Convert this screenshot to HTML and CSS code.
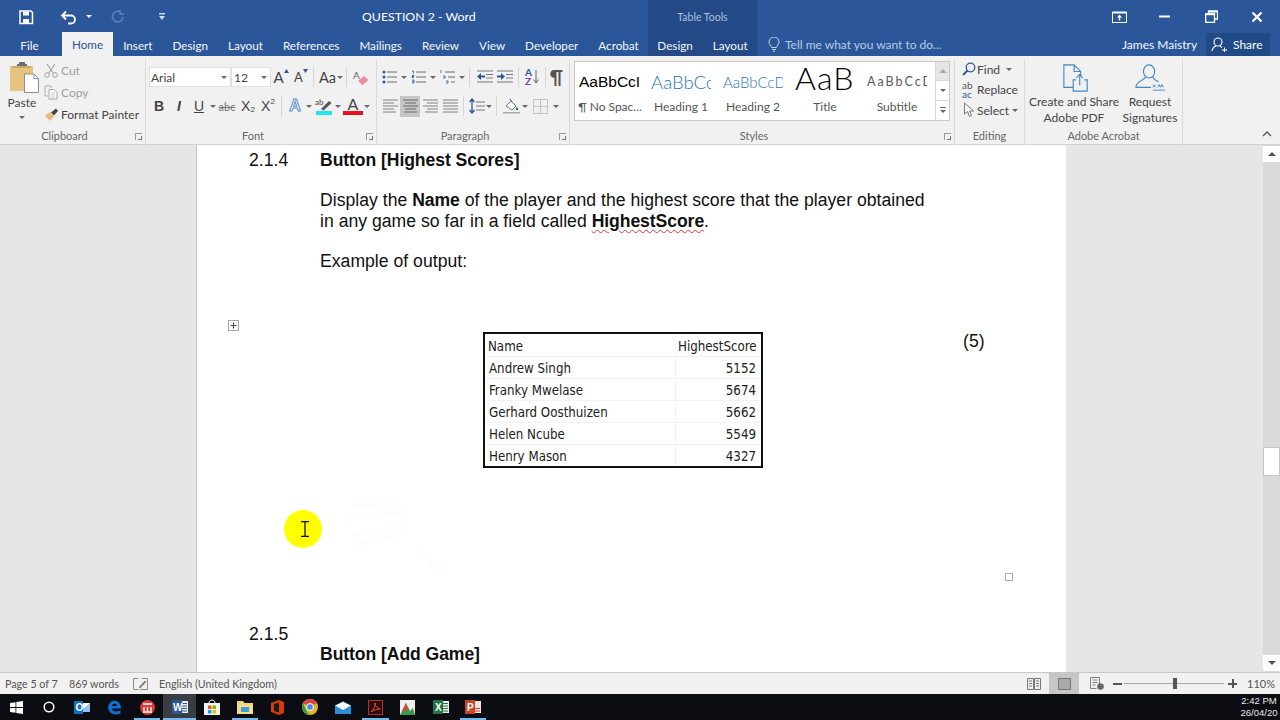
FILE: index.html
```html
<!DOCTYPE html>
<html lang="en">
<head>
<meta charset="utf-8">
<title>QUESTION 2 - Word</title>
<link rel="stylesheet" href="styles.css">
</head>
<body>
<div class="app">
  <header class="chrome">
    <div class="titlebar">
      <div class="qat">
        <span class="qat-item q-save"><svg width="16" height="16" viewBox="0 0 16 16"><path d="M2 2h11l1.500 1.500V14.500H2z" fill="none" stroke="#fff" stroke-width="1.500"/><rect x="5" y="2.500" width="6" height="4" fill="#fff"/><rect x="5" y="10" width="6" height="4" fill="#fff"/></svg></span>
        <span class="qat-item q-undo"><svg width="18" height="16" viewBox="0 0 18 16"><path d="M6 2.500 2 6.500l4 4M2.500 6.500H11a4 4 0 0 1 0 8H8" fill="none" stroke="#fff" stroke-width="1.800"/></svg></span>
        <span class="caret caret-white q-car"></span>
        <span class="qat-item q-redo"><svg width="14" height="16" viewBox="0 0 14 16"><path d="M10 3.500A5.300 5.300 0 1 0 12 8M9 1v4h4" fill="none" stroke="#5c82b8" stroke-width="1.500"/></svg></span>
        <span class="qat-item q-custom"><svg width="8" height="8" viewBox="0 0 8 8"><rect x="1" y="0" width="6" height="1.500" fill="#cfdcee"/><path d="M1 3h6L4 7z" fill="#cfdcee"/></svg></span>
      </div>
      <div class="doc-title">QUESTION 2 - Word</div>
      <div class="ctx-title">Table Tools</div>
      <div class="win-ctrls">
        <span class="win w1"><svg width="15" height="12" viewBox="0 0 15 12"><rect x=".5" y="1.500" width="14" height="10" fill="none" stroke="#fff"/><rect x=".5" y=".5" width="14" height="2" fill="#fff"/><path d="M7.500 3.500 5 6.500h1.800V9.500h1.400V6.500H10z" fill="#fff"/></svg></span>
        <span class="win w2"><svg width="12" height="3" viewBox="0 0 12 3"><rect width="11" height="2" y=".5" fill="#fff"/></svg></span>
        <span class="win w3"><svg width="13" height="13" viewBox="0 0 13 13"><path d="M3.500 3V1h9v8h-3" fill="none" stroke="#fff" stroke-width="1.300"/><rect x=".7" y="3.700" width="8.800" height="8.600" fill="none" stroke="#fff" stroke-width="1.300"/><rect x="3.500" y="1" width="9" height="1.500" fill="#fff"/><rect x=".7" y="3.700" width="8.800" height="1.500" fill="#fff"/></svg></span>
        <span class="win w4"><svg width="12" height="12" viewBox="0 0 12 12"><path d="M1.500 1.500l9 9M10.500 1.500l-9 9" stroke="#fff" stroke-width="2.200"/></svg></span>
      </div>
    </div>
    <nav class="tabs">
      <div class="tabs-main">
        <span class="tab tab-file">File</span>
        <span class="tab tab-active">Home</span>
        <span class="tab">Insert</span>
        <span class="tab">Design</span>
        <span class="tab">Layout</span>
        <span class="tab">References</span>
        <span class="tab">Mailings</span>
        <span class="tab">Review</span>
        <span class="tab">View</span>
        <span class="tab">Developer</span>
        <span class="tab">Acrobat</span>
      </div>
      <div class="ctx-tabs">
        <span class="tab">Design</span>
        <span class="tab">Layout</span>
      </div>
      <span class="tell"><svg width="12" height="15" viewBox="0 0 12 15"><path d="M3.500 10.500C3 8.500 1 7.500 1 5a5 5 0 0 1 10 0c0 2.500-2 3.500-2.500 5.500zM4 12.500h4M5 14.300h2" fill="none" stroke="#c3d3ea" stroke-width="1"/></svg><span>Tell me what you want to do...</span></span>
      <span class="user">James Maistry</span>
      <span class="share"><svg width="16" height="15" viewBox="0 0 16 15"><circle cx="7" cy="5" r="4" fill="none" stroke="#fff" stroke-width="1.100"/><path d="M1 14c.5-3 2.500-4.500 4-5M9 9l2 1.500M11 13h5M13.500 10.500v5" fill="none" stroke="#fff" stroke-width="1.100"/></svg><span>Share</span></span>
    </nav>
  </header>

  <section class="ribbon">
    <div class="group g-clip">
      <div class="clip-body">
        <div class="paste">
          <svg width="30" height="31" viewBox="0 0 30 31"><rect x="0" y="4" width="23" height="25" fill="#e6c47f"/><rect x="2" y="4" width="19" height="2" fill="#c9a868"/><path d="M7 4V2h2V0h6v2h2v2z" fill="#6d6d6d"/><path d="M14.500 12H24l4.500 4.500V30.500h-14z" fill="#fff" stroke="#8f8f8f"/><path d="M24 12v4.500h4.500" fill="none" stroke="#8f8f8f"/></svg>
          <span class="paste-label">Paste</span>
          <span class="caret"></span>
        </div>
        <div class="clip-list">
          <div class="clip-row off"><svg width="14" height="15" viewBox="0 0 14 15"><path d="M3 1l6.500 9.500M11 1 4.500 10.500" stroke="#a5a5a5" stroke-width="1.200" fill="none"/><circle cx="3" cy="12" r="2.300" fill="none" stroke="#a5a5a5"/><circle cx="11" cy="12" r="2.300" fill="none" stroke="#a5a5a5"/></svg><span>Cut</span></div>
          <div class="clip-row off"><svg width="14" height="15" viewBox="0 0 14 15"><path d="M1 1h6v2M1 1v10h3" fill="none" stroke="#b0b0b0"/><path d="M5 4.500h5l3 3V14H5z" fill="#fff" stroke="#a5a5a5"/><path d="M7 8h4M7 10h4M7 12h4" stroke="#c5c5c5"/></svg><span>Copy</span></div>
          <div class="clip-row clip-fp"><svg width="15" height="15" viewBox="0 0 15 15"><path d="M1 8.500 6 5l4 4.500-4 4.500z" fill="#e5bf78"/><path d="M7 5.500l5-4 2 2.500-4 4.500z" fill="#444"/></svg><span>Format Painter</span></div>
        </div>
      </div>
      <div class="group-label">Clipboard</div>
      <span class="launcher"></span>
    </div>

    <div class="group g-font">
      <div class="rows">
        <div class="row">
          <span class="combo c-font"><span>Arial</span><i class="caret"></i></span>
          <span class="combo c-size"><span>12</span><i class="caret"></i></span>
          <span class="btn b-grow"><span class="big-a">A</span><svg width="5" height="4" viewBox="0 0 5 4"><path d="M0 4 2.500 0 5 4z" fill="#2b579a"/></svg></span>
          <span class="btn b-shrink"><span class="mid-a">A</span><svg width="5" height="4" viewBox="0 0 5 4"><path d="M0 0 2.500 4 5 0z" fill="#2b579a"/></svg></span>
          <span class="sep s-a"></span>
          <span class="btn b-case"><span class="aa">Aa</span><i class="caret"></i></span>
          <span class="sep s-b"></span>
          <span class="btn b-erase"><svg width="16" height="17" viewBox="0 0 16 17"><text x="0" y="10" class="mini">A</text><path d="M5 12 11 7l4.500 4-6 5z" fill="#ee8d9d"/></svg></span>
        </div>
        <div class="row">
          <span class="btn b-w20 fmt fmt-b">B</span>
          <span class="btn b-w20 fmt fmt-i">I</span>
          <span class="btn b-w20 fmt fmt-u">U</span>
          <i class="caret c-u"></i>
          <span class="btn b-strike">abc</span>
          <span class="btn b-w20 fmt fmt-x">X<sub>2</sub></span>
          <span class="btn b-w20 fmt fmt-x">X<sup>2</sup></span>
          <span class="sep s-c"></span>
          <span class="btn b-w20 a-fx">A</span>
          <i class="caret c-g"></i>
          <span class="btn b-w20"><svg width="18" height="17" viewBox="0 0 18 17"><text x="0" y="7" class="mini2">ab</text><path d="M6 11 14 3l2.500 2-8 7.500z" fill="#555"/><rect x="1" y="13" width="16" height="4" fill="#1fe8ee"/></svg></span>
          <i class="caret c-g"></i>
          <span class="btn b-w18 col-a">A</span>
          <i class="caret c-g"></i>
        </div>
      </div>
      <div class="group-label">Font</div>
      <span class="launcher"></span>
    </div>

    <div class="group g-para">
      <div class="rows">
        <div class="row">
          <span class="btn b-list"><svg width="16" height="14" viewBox="0 0 16 14"><circle cx="2" cy="2" r="1.500" fill="#2b579a"/><circle cx="2" cy="7" r="1.500" fill="#2b579a"/><circle cx="2" cy="12" r="1.500" fill="#2b579a"/><path d="M5 2h10M5 7h10M5 12h10" stroke="#6a6a6a"/></svg></span><i class="caret c-l"></i>
          <span class="btn b-list"><svg width="16" height="14" viewBox="0 0 16 14"><path d="M1 1h1.500v2.500M1 5.500h2v1H1v1h2M1 10h2v3H1M1 11.500h2" stroke="#2b579a" stroke-width=".8" fill="none"/><path d="M5 2h10M5 7h10M5 12h10" stroke="#6a6a6a"/></svg></span><i class="caret c-l"></i>
          <span class="btn b-list"><svg width="16" height="14" viewBox="0 0 16 14"><path d="M1 0v3M3 6h2v2H3M6 11h2v2H6" stroke="#2b579a" stroke-width=".8" fill="none"/><path d="M5 2h10M8 7h7M11 12h4" stroke="#6a6a6a"/></svg></span><i class="caret c-l"></i>
          <span class="sep s-d"></span>
          <span class="btn b-ind"><svg width="16" height="14" viewBox="0 0 16 14"><path d="M0 1h16M9 4.500h7M9 8h7M0 12h16" stroke="#777"/><path d="M0 6.500 4 3v2.500h4v2H4V10z" fill="#2b579a"/></svg></span>
          <span class="btn b-ind"><svg width="16" height="14" viewBox="0 0 16 14"><path d="M0 1h16M9 4.500h7M9 8h7M0 12h16" stroke="#777"/><path d="M8 6.500 4 3v2.500H0v2h4V10z" fill="#2b579a"/></svg></span>
          <span class="sep s-e"></span>
          <span class="btn b-sort"><span class="sort-az"><b>A</b><b class="z">Z</b></span><svg width="6" height="14" viewBox="0 0 6 14"><path d="M3 0v12M.5 9.500 3 13l2.500-3.500" fill="none" stroke="#666"/></svg></span>
          <span class="sep s-f"></span>
          <span class="btn b-pil">¶</span>
        </div>
        <div class="row">
          <span class="btn b-al"><svg width="15" height="14" viewBox="0 0 15 14"><path d="M0 1h15M0 4h11M0 7h15M0 10h11M0 13h13" stroke="#808080"/></svg></span>
          <span class="btn b-al b-on"><svg width="15" height="14" viewBox="0 0 15 14"><path d="M0 1h15M2 4h11M0 7h15M2 10h11M1 13h13" stroke="#6a6a6a"/></svg></span>
          <span class="btn b-al"><svg width="15" height="14" viewBox="0 0 15 14"><path d="M0 1h15M4 4h11M0 7h15M4 10h11M2 13h13" stroke="#808080"/></svg></span>
          <span class="btn b-al"><svg width="15" height="14" viewBox="0 0 15 14"><path d="M0 1h15M0 4h15M0 7h15M0 10h15M0 13h15" stroke="#808080"/></svg></span>
          <span class="sep s-g"></span>
          <span class="btn b-sp"><svg width="16" height="16" viewBox="0 0 16 16"><path d="M3 1v14M.5 4 3 1l2.500 3M.5 12 3 15l2.500-3" fill="none" stroke="#2b579a" stroke-width="1.300"/><path d="M7 4h9M7 8h9M7 12h9" stroke="#777"/></svg></span><i class="caret c-l"></i>
          <span class="sep s-h"></span>
          <span class="btn b-sh"><svg width="17" height="16" viewBox="0 0 17 16"><path d="M3 8 8 3l5 5-4 4z" fill="#fff" stroke="#777"/><path d="M7 1l2 3" stroke="#2b579a"/><path d="M14 9c1 1.500 1.500 2 1 3h-2c-.5-1 0-1.500 1-3z" fill="#2b579a"/><rect x="0" y="14" width="17" height="1.500" fill="#aaa"/></svg></span><i class="caret c-l"></i>
          <span class="btn b-bd"><svg width="15" height="15" viewBox="0 0 15 15"><path d="M.5.500h14v14H.5zM7.500.500v14M.5 7.500h14" fill="none" stroke="#c2c2c2"/></svg></span><i class="caret c-b"></i>
        </div>
      </div>
      <div class="group-label">Paragraph</div>
      <span class="launcher"></span>
    </div>

    <div class="group g-styles">
      <div class="gallery">
        <div class="style style-first"><div class="sample s-nospace">AaBbCcI</div><div class="style-name">¶ No Spac...</div></div>
        <div class="style"><div class="sample s-h1">AaBbCc</div><div class="style-name">Heading 1</div></div>
        <div class="style"><div class="sample s-h2">AaBbCcD</div><div class="style-name">Heading 2</div></div>
        <div class="style"><div class="sample s-title">AaB</div><div class="style-name">Title</div></div>
        <div class="style"><div class="sample s-sub">AaBbCcD</div><div class="style-name">Subtitle</div></div>
        <div class="gal-scroll">
          <span class="gs gs-off"><i class="tri-up"></i></span>
          <span class="gs"><i class="caret"></i></span>
          <span class="gs gs-end"><i class="more-bar"></i><i class="caret"></i></span>
        </div>
      </div>
      <div class="group-label">Styles</div>
      <span class="launcher"></span>
    </div>

    <div class="group g-edit">
      <div class="edit-list">
        <div class="edit-row"><svg width="14" height="14" viewBox="0 0 14 14"><circle cx="8.500" cy="5.500" r="4.300" fill="none" stroke="#2b579a" stroke-width="1.300"/><path d="M5.500 8.500 1 13" stroke="#2b579a" stroke-width="1.800"/></svg><span>Find</span><i class="caret"></i></div>
        <div class="edit-row"><span class="rep-icon"><span>ab</span><span class="rep-b">ac</span></span><span>Replace</span></div>
        <div class="edit-row"><svg width="14" height="16" viewBox="0 0 14 16"><path d="M2.500 1v11l3-2.500 2 5 2-1-2-4.500h4z" fill="#fff" stroke="#777"/></svg><span>Select</span><i class="caret caret-near"></i></div>
      </div>
      <div class="group-label label-plain">Editing</div>
    </div>

    <div class="group g-acro">
      <div class="acro-body">
        <div class="acro-btn a-create">
          <svg width="28" height="28" viewBox="0 0 28 30"><path d="M11 25H1V1h11l7 7v5M12 1v7h7" fill="none" stroke="#3f86c8" stroke-width="1.200"/><path d="M14 17h-3v12h15V17h-3" fill="none" stroke="#3f86c8" stroke-width="1.200"/><path d="M18 23V11M14.500 15 18 11l3.500 4" fill="none" stroke="#3f86c8" stroke-width="1.200"/></svg>
          <span>Create and Share<br>Adobe PDF</span>
        </div>
        <div class="acro-btn a-req">
          <svg width="32" height="28" viewBox="0 0 32 30"><ellipse cx="15" cy="8" rx="6" ry="7" fill="none" stroke="#3f86c8" stroke-width="1.200"/><path d="M11 14c0 3-9 4-10 10v1h16M19 14c0 2 3 3 6 5" fill="none" stroke="#3f86c8" stroke-width="1.200"/><path d="M19 22l3 3M22 22l-3 3M24 25l2-3 1 3 2-3 1 3" fill="none" stroke="#3f86c8"/><path d="M19 28h13" stroke="#3f86c8"/></svg>
          <span>Request<br>Signatures</span>
        </div>
      </div>
      <div class="group-label label-plain">Adobe Acrobat</div>
    </div>
    <div class="ribbon-rest"><svg width="10" height="6" viewBox="0 0 10 6"><path d="M1 5 5 1l4 4" fill="none" stroke="#555" stroke-width="1.400"/></svg></div>
  </section>

  <main class="workspace">
    <div class="gutter-left"></div>
    <article class="page">
      <div class="sec"><span class="num">2.1.4</span><div class="body"><strong>Button [Highest Scores]</strong></div></div>
      <div class="sec para"><span class="num"></span><div class="body">Display the <strong>Name</strong> of the player and the highest score that the player obtained<br>in any game so far in a field called <strong class="squig">HighestScore</strong>.</div></div>
      <div class="sec para"><span class="num"></span><div class="body">Example of output:</div></div>
      <div class="out-row">
        <table class="result">
          <thead><tr><th class="c-name">Name</th><th class="c-score">HighestScore</th></tr></thead>
          <tbody>
            <tr><td>Andrew Singh</td><td class="n">5152</td></tr>
            <tr><td>Franky Mwelase</td><td class="n">5674</td></tr>
            <tr><td>Gerhard Oosthuizen</td><td class="n">5662</td></tr>
            <tr><td>Helen Ncube</td><td class="n">5549</td></tr>
            <tr class="last"><td>Henry Mason</td><td class="n">4327</td></tr>
          </tbody>
        </table>
        <span class="marks">(5)</span>
      </div>
      <div class="sec sec-next"><span class="num">2.1.5</span><div class="body body-drop"><strong>Button [Add Game]</strong></div></div>

      <span class="tbl-handle"><svg width="11" height="11" viewBox="0 0 11 11"><rect x=".5" y=".5" width="10" height="10" fill="#fff" stroke="#a8a8a8"/><path d="M5.500 2.500v6M2.500 5.500h6" stroke="#444"/></svg></span>
      <span class="cell-handle"></span>
      <svg class="ghost" width="120" height="80" viewBox="0 0 120 80"><path d="M20 10h50M15 25c15-5 40-8 60-5M20 40l55-8M25 50l45-12M85 55l25 20M95 70l20 5" fill="none" stroke="#fdfdfd" stroke-width="5"/></svg>
      <span class="pointer"><svg width="10" height="16" viewBox="0 0 10 16"><path d="M1 .7h8M1 15.300h8M5 .7v14.600" fill="none" stroke="#111" stroke-width="1.300"/></svg></span>
    </article>
    <div class="gutter-right"></div>
    <aside class="scrollbar">
      <span class="sb-btn"><i class="tri-up dark"></i></span>
      <span class="sb-thumb"></span>
      <span class="sb-btn"><i class="caret dark"></i></span>
    </aside>
  </main>

  <footer class="status">
    <span class="st-page">Page 5 of 7</span>
    <span class="st-words">869 words</span>
    <svg class="st-proof" width="15" height="14" viewBox="0 0 15 14"><path d="M.5 1.500h5M.5 1.500v11h5M9 1.500h5.500v11H7" fill="none" stroke="#8a8a8a"/><path d="M6.500 9.500 12 3.500l1.300 1.300-5.500 6-2 .5z" fill="#777"/></svg>
    <span class="st-lang">English (United Kingdom)</span>
    <span class="st-right">
      <span class="view"><svg width="14" height="12" viewBox="0 0 14 12"><path d="M.5.500h6v11h-6zM7.500.500h6v11h-6zM2 3h3M2 5.500h3M2 8h3M9 3h3M9 5.500h3M9 8h3" fill="none" stroke="#777"/></svg></span>
      <span class="view view-on"><svg width="13" height="12" viewBox="0 0 13 12"><rect x=".5" y=".5" width="12" height="11" fill="#a9a9a9" stroke="#777"/></svg></span>
      <span class="view"><svg width="14" height="13" viewBox="0 0 14 13"><path d="M.5.500h9v9M.5.500v11h6M2.500 3h5M2.500 5.500h5M2.500 8h3" fill="none" stroke="#808080"/><circle cx="10.500" cy="9.500" r="3.300" fill="#666"/></svg></span>
      <span class="zoom-minus"></span>
      <span class="zoom-track"><span class="zoom-thumb"></span></span>
      <span class="zoom-plus"></span>
      <span class="zoom-pct">110%</span>
    </span>
  </footer>

  <div class="taskbar">
    <span class="tb tb-win"><svg width="13" height="13" viewBox="0 0 13 13"><path d="M0 2l5.500-.8V6H0zM6.300 1.100 13 0v6H6.300zM0 7h5.500v4.800L0 11zM6.300 7H13v6l-6.700-1z" fill="#fff"/></svg></span>
    <span class="tb"><svg width="12" height="12" viewBox="0 0 12 12"><circle cx="6" cy="6" r="4.800" fill="none" stroke="#fff" stroke-width="1.500"/></svg></span>
    <span class="tb"><svg width="16" height="15" viewBox="0 0 16 15"><rect x="5" y="3" width="11" height="9" fill="#8cc4ef"/><path d="M5 3l5.500 5L16 3" fill="#fff"/><rect x="0" y="1" width="9" height="13" fill="#0f6fc6"/><text x="1.500" y="11" class="t-app">O</text></svg></span>
    <span class="tb"><svg width="15" height="15" viewBox="0 0 15 15"><path d="M1 7C2 2 6 0 9 1c3.500 1 5 4 5 7.500H5c.3 3 5 4 8.500 1.500v3.500c-4 2-9 1-11-2C1.500 10 1 8.500 1 7zM5 6h5c0-3-4.500-3-5 0z" fill="#0c6fd1"/></svg></span>
    <span class="tb tb-open"><svg width="15" height="15" viewBox="0 0 15 15"><circle cx="7.500" cy="7.500" r="7.500" fill="#d63a3a"/><path d="M3 4h9M4 7v4M7.500 7v4M11 7v4M3 12h9" stroke="#fff" stroke-width="1.300"/></svg></span>
    <span class="tb tb-open tb-active"><svg width="16" height="14" viewBox="0 0 16 14"><rect x="7" y="1" width="9" height="12" fill="#e7eef8"/><path d="M9 3.500h6M9 6h6M9 8.500h6M9 11h6" stroke="#2b579a"/><rect x="0" y="0" width="10" height="14" fill="#2b579a"/><text x="1" y="10.500" class="t-app">W</text></svg></span>
    <span class="tb"><svg width="16" height="16" viewBox="0 0 16 16"><path d="M5 4c0-4 6-4 6 0" fill="none" stroke="#fff"/><rect x="0" y="4" width="16" height="12" fill="#f2f2f2"/><rect x="4" y="6.500" width="3.500" height="3.500" fill="#f25022"/><rect x="8.500" y="6.500" width="3.500" height="3.500" fill="#7fba00"/><rect x="4" y="11" width="3.500" height="3.500" fill="#00a4ef"/><rect x="8.500" y="11" width="3.500" height="3.500" fill="#ffb900"/></svg></span>
    <span class="tb tb-open"><svg width="16" height="14" viewBox="0 0 16 14"><path d="M0 1h6l1.500 2H16v11H0z" fill="#f4d77a"/><rect x="0" y="5" width="16" height="9" fill="#f6dd8e"/><rect x="4" y="7" width="8" height="5" fill="#3b9fd8"/></svg></span>
    <span class="tb"><svg width="13" height="15" viewBox="0 0 13 15"><path d="M0 3 8 0l5 2v11l-5 2-8-3z" fill="#d83b01"/><path d="M3 4l5-1.500v10L3 11z" fill="#1a1a1a"/></svg></span>
    <span class="tb"><svg width="16" height="16" viewBox="0 0 16 16"><circle cx="8" cy="8" r="8" fill="#e3b61f"/><path d="M8 8 1 4a8 8 0 0 1 14 0z" fill="#d9463c"/><path d="M1 4l4 9 3 3a8 8 0 0 1-7-12z" fill="#3b9a48"/><circle cx="8" cy="8" r="3.500" fill="#4a8bf0" stroke="#fff"/></svg></span>
    <span class="tb"><svg width="16" height="13" viewBox="0 0 16 13"><path d="M0 5 8 0l8 5v8H0z" fill="#2a8fd8"/><path d="M0 4.500 8 9l8-4.500L8 1z" fill="#fff"/></svg></span>
    <span class="tb tb-open"><svg width="15" height="15" viewBox="0 0 15 15"><rect x=".5" y=".5" width="14" height="14" fill="#2a0a0a" stroke="#a33"/><path d="M3 12c3-2 4-6 4-9 0 3 2 5 5 6-3 0-6 1-9 3z" fill="none" stroke="#e44" stroke-width="1"/></svg></span>
    <span class="tb"><svg width="15" height="15" viewBox="0 0 15 15"><rect width="15" height="15" fill="#eee"/><path d="M0 15 6 3l4 8 3-3 2 7z" fill="#3b9a48"/><path d="M6 3l2 8H2z" fill="#d9463c"/></svg></span>
    <span class="tb"><svg width="16" height="14" viewBox="0 0 16 14"><rect x="7" y="1" width="9" height="12" fill="#e5f1e9"/><path d="M9 3.500h6M9 6h6M9 8.500h6M9 11h6" stroke="#217346"/><rect x="0" y="0" width="10" height="14" fill="#217346"/><text x="2" y="10.500" class="t-app">X</text></svg></span>
    <span class="tb tb-open"><svg width="16" height="14" viewBox="0 0 16 14"><rect x="7" y="1" width="9" height="12" fill="#f6e3dc"/><path d="M9 8.500h6M9 11h6" stroke="#c8472a"/><rect x="0" y="0" width="10" height="14" fill="#c8472a"/><text x="2" y="10.500" class="t-app">P</text></svg></span>
    <div class="clock"><span>2:42 PM</span><span>26/04/20</span></div>
  </div>
</div>
</body>
</html>
```

FILE: styles.css
```css
* { box-sizing: border-box; }
html, body { margin: 0; padding: 0; }
body { width: 1280px; height: 720px; overflow: hidden; font-family: Lato, "Open Sans", sans-serif; }
i { font-style: normal; display: block; }
svg { display: block; flex: none; }
.app { display: flex; flex-direction: column; width: 1280px; height: 720px; }

/* chrome */
.chrome { background: #2b579a; color: #fff; flex: none; }
.titlebar { height: 33px; display: flex; align-items: center; position: relative; }
.qat { display: flex; align-items: center; width: 362px; flex: none; }
.qat-item { display: flex; }
.q-save { margin-left: 18px; }
.q-undo { margin-left: 26px; }
.q-car { margin-left: 8px; }
.q-redo { margin-left: 19px; }
.q-custom { margin-left: 33px; }
.doc-title { width: 286px; flex: none; font-size: 12.300px; color: #fff; }
.ctx-title { width: 109px; flex: none; height: 33px; background: #234a86; color: #a9c0e0; font-size: 10.500px; display: flex; align-items: center; justify-content: center; }
.win-ctrls { flex: 1; display: flex; align-items: center; position: relative; }
.win { display: flex; }
.w1 { margin-left: 355px; }
.w2 { margin-left: 32px; }
.w3 { margin-left: 34px; }
.w4 { margin-left: 33px; }

.tabs { height: 23px; display: flex; align-items: stretch; font-size: 11.700px; }
.tabs-main { width: 648px; flex: none; display: flex; align-items: stretch; }
.tab { flex: none; padding: 0 10px; display: flex; align-items: center; white-space: nowrap; color: #f4f7fb; }
.tab-file { margin-left: 11px; margin-right: 14px; width: 37px; padding: 0; justify-content: center; }
.tab-active { background: #f1f1f1; color: #2b579a; margin-top: -1px; height: 24px; }
.ctx-tabs { display: flex; background: #234a86; width: 109px; flex: none; justify-content: center; }
.tell { display: flex; align-items: center; gap: 5px; color: #b8cbe6; margin-left: 11px; width: 354px; flex: none; white-space: nowrap; font-size: 12px; }
.user { display: flex; align-items: center; width: 84px; flex: none; white-space: nowrap; color: #f4f7fb; font-size: 12px; }
.share { display: flex; align-items: center; gap: 6px; width: 64px; flex: none; background: #1f4a85; padding-left: 5px; font-size: 12px; }

/* ribbon */
.ribbon { height: 89px; flex: none; background: #f1f1f1; display: flex; border-bottom: 1px solid #d2d2d2; font-size: 12px; color: #444; }
.group { position: relative; display: flex; flex-direction: column; height: 86px; margin-top: 3px; border-right: 1px solid #dadada; flex: none; }
.group-label { position: absolute; left: 0; right: 16px; bottom: 0; height: 17px; text-align: center; font-size: 11px; color: #666; line-height: 15px; }
.label-plain { right: 0; }
.launcher { position: absolute; right: 3px; bottom: 5px; width: 7px; height: 7px; border: 1px solid #9a9a9a; border-width: 1px 0 0 1px; }
.launcher::after { content: ""; position: absolute; right: 0; bottom: 0; width: 3px; height: 3px; border-right: 1px solid #777; border-bottom: 1px solid #777; }
.caret { width: 0; height: 0; border: 3px solid transparent; border-top: 3px solid #666; border-bottom: 0; flex: none; }
.caret-white { border-top-color: #fff; }
.tri-up { width: 0; height: 0; border: 4px solid transparent; border-bottom: 4px solid #aaa; border-top: 0; }

.g-clip { width: 146px; }
.clip-body { display: flex; }
.paste { width: 44px; display: flex; flex-direction: column; align-items: center; padding-top: 3px; }
.paste svg { margin-left: 5px; }
.paste-label { margin-top: 2px; line-height: 16px; }
.paste .caret { margin-top: 5px; }
.clip-list { display: flex; flex-direction: column; }
.clip-row { height: 22px; display: flex; align-items: center; gap: 3px; white-space: nowrap; }
.clip-fp { gap: 2px; }
.clip-row.off { color: #a0a0a0; }

.g-font { width: 231px; }
.g-para { width: 193px; }
.rows { display: flex; flex-direction: column; gap: 9px; padding-top: 8px; }
.row { height: 20px; display: flex; align-items: center; padding-left: 3px; }
.combo { height: 20px; background: #fff; border: 1px solid #e0e0e0; display: flex; align-items: center; justify-content: space-between; padding: 0 3px 0 1px; font-size: 12px; }
.c-font { width: 82px; }
.c-size { width: 40px; padding-left: 2px; }
.btn { display: flex; align-items: center; justify-content: center; flex: none; height: 20px; }
.sep { width: 1px; height: 20px; background: #d4d4d4; flex: none; }
.b-grow { width: 20px; align-items: flex-start; }
.b-shrink { width: 20px; align-items: flex-start; }
.b-grow svg, .b-shrink svg { margin-top: 2px; }
.big-a { font-size: 15px; line-height: 20px; color: #444; }
.mid-a { font-size: 13px; line-height: 21px; color: #444; }
.s-a { margin-left: 2px; margin-right: 4px; }
.b-case { width: 26px; gap: 1px; }
.aa { font-size: 14.500px; }
.s-b { margin-left: 2px; margin-right: 5px; }
.b-erase { width: 18px; }
.mini { font-family: Lato, sans-serif; font-size: 10px; fill: #666; }
.mini2 { font-family: Lato, sans-serif; font-size: 8px; fill: #444; }
.b-w20 { width: 20px; }
.b-w18 { width: 20px; }
.fmt { font-family: "Liberation Sans", sans-serif; color: #444; font-size: 14px; }
.fmt-b { font-weight: 700; }
.fmt-i { font-style: italic; font-weight: 700; }
.fmt-u { text-decoration: underline; }
.c-u { margin: 0 0 0 1px; }
.b-strike { width: 22px; font-size: 11px; text-decoration: line-through; color: #777; }
.fmt-x { font-weight: 400; font-size: 14px; }
.fmt-x sub, .fmt-x sup { font-size: 8px; line-height: 8px; vertical-align: baseline; }
.fmt-x sub { align-self: flex-end; margin-bottom: 2px; }
.fmt-x sup { align-self: flex-start; margin-top: 2px; }
.s-c { margin: 0 3px 0 3px; }
.a-fx { color: #fff; font-family: "Liberation Sans", sans-serif; font-weight: 700; font-size: 16px; -webkit-text-stroke: 1px #5b8fd0; }
.c-g { margin: 0 2px 0 1px; }
.col-a { border-bottom: 4px solid #e81123; font-size: 16px; line-height: 14px; height: 18px; color: #444; }

.c-l { margin: 0 2px 0 0; }
.b-list { width: 21px; justify-content: flex-start; padding-left: 2px; }
.s-d { margin: 0 5px 0 2px; }
.b-ind { width: 20px; }
.s-e { margin: 0 3px 0 3px; }
.b-sort { width: 20px; gap: 1px; }
.sort-az { display: flex; flex-direction: column; font-size: 10px; line-height: 9px; color: #2b579a; }
.sort-az .z { color: #7a3ea5; }
.s-f { margin: 0 2px 0 3px; }
.b-pil { width: 17px; font-size: 18px; color: #555; font-weight: 700; }
.b-al { width: 20px; height: 21px; }
.b-on { background: #c6c6c6; }
.s-g { margin: 0 3px 0 3px; }
.b-sp { width: 19px; }
.s-h { margin: 0 4px 0 2px; }
.b-sh { width: 21px; }
.b-bd { width: 21px; }
.c-b { margin-left: 2px; }

.g-styles { width: 385px; }
.gallery { display: flex; width: 376px; height: 60px; margin: 2px 0 0 4px; background: #fff; border: 1px solid #c6c6c6; }
.style { width: 72px; display: flex; flex-direction: column; align-items: center; padding: 0 6px; }
.style-first { width: 70px; padding: 0 4px; }
.sample { height: 38px; line-height: 40px; white-space: nowrap; overflow: hidden; width: 100%; text-align: left; }
.style-name { font-size: 12px; line-height: 14px; white-space: nowrap; color: #555; }
.s-nospace { font-family: "Liberation Sans", sans-serif; font-size: 15.500px; color: #000; }
.s-h1 { font-family: Lato, sans-serif; font-weight: 300; font-size: 18.500px; color: #2e74b5; }
.s-h2 { font-family: Lato, sans-serif; font-size: 15px; font-weight: 300; color: #2e74b5; }
.s-title { font-family: Lato, sans-serif; font-weight: 300; font-size: 32px; color: #000; line-height: 32px; letter-spacing: 1px; }
.s-sub { font-family: Lato, sans-serif; font-size: 12.500px; letter-spacing: 2px; color: #595959; }
.gal-scroll { width: 14px; margin-left: auto; display: flex; flex-direction: column; border-left: 1px solid #d8d8d8; }
.gs { height: 20px; display: flex; flex-direction: column; gap: 2px; align-items: center; justify-content: center; border-bottom: 1px solid #d8d8d8; background: #fff; }
.gs-off { background: #e6e6e6; }
.gs-end { border-bottom: 0; }
.more-bar { width: 6px; height: 1px; background: #666; }

.g-edit { width: 70px; }
.edit-list { display: flex; flex-direction: column; padding: 0 0 0 7px; }
.edit-row { height: 20.500px; display: flex; align-items: center; gap: 1px; white-space: nowrap; }
.edit-row .caret { margin-left: 5px; }
.edit-row .caret-near { margin-left: 2px; }
.rep-icon { display: flex; flex-direction: column; width: 14px; font-size: 10px; line-height: 8.500px; color: #555; }
.rep-b { color: #2b579a; }

.g-acro { width: 158px; }
.acro-body { display: flex; padding-top: 5px; }
.acro-btn { display: flex; flex-direction: column; align-items: center; text-align: center; line-height: 16px; white-space: nowrap; }
.acro-btn svg { margin-bottom: 2px; }
.a-create { width: 98px; }
.a-create svg { margin-left: 4px; }
.a-req { width: 60px; margin-left: -3px; }
.ribbon-rest { flex: 1; display: flex; align-items: flex-end; justify-content: flex-end; padding: 0 8px 7px 0; }

/* document */
.workspace { flex: 1; min-height: 0; display: flex; background: #e6e6e6; }
.gutter-left { width: 197px; border-right: 1px solid #c6c6c6; flex: none; }
.page { width: 869px; flex: none; background: #fff; position: relative; overflow: hidden; padding: 5px 0 0 52px; font-family: "Liberation Sans", Arial, sans-serif; font-size: 17.600px; line-height: 20.300px; color: #111; letter-spacing: .02px; }
.page strong { letter-spacing: -.08px; }
.sec { display: grid; grid-template-columns: 71px 1fr; }
.para { margin-top: 20px; }
.out-row { display: flex; align-items: flex-start; margin: 61px 0 0 234px; }
.marks { margin-left: 200px; margin-top: -1px; }
.sec-next { margin-top: 156px; }
.body-drop { padding-top: 20.300px; }
.squig { text-decoration: underline wavy #d33; text-decoration-thickness: 1px; text-underline-offset: 2px; }
.result { border: 2px solid #111; border-collapse: separate; border-spacing: 0; width: 280px; height: 136px; table-layout: fixed; font-family: "DejaVu Sans", sans-serif; font-stretch: condensed; font-size: 13.200px; line-height: 14px; color: #222; letter-spacing: 0; }
.result th, .result td { padding: 0; height: 22px; border-bottom: 1px solid #f2f2f2; font-weight: 400; text-align: left; }
.result td { padding-top: 2px; }
.result th { height: 23px; padding-top: 3px; }
.result .last td { border-bottom: 0; height: 21px; }
.c-name { width: 191px; padding-left: 3px !important; border-right: 1px solid #f2f2f2; }
.c-score { padding-left: 2px !important; }
.result td:first-child { padding-left: 4px; border-right: 1px solid #f2f2f2; }
.result .n { text-align: right; padding-right: 5px; }
.tbl-handle { position: absolute; left: 31px; top: 175px; }
.cell-handle { position: absolute; left: 808px; top: 428px; width: 8px; height: 8px; border: 1px solid #aaa; background: #fff; }
.ghost { position: absolute; left: 135px; top: 350px; }
.pointer { position: absolute; left: 87px; top: 365px; width: 38px; height: 38px; border-radius: 50%; background: #ffff00; display: flex; align-items: center; justify-content: center; padding-left: 3px; }
.gutter-right { flex: 1; }
.scrollbar { width: 17px; flex: none; background: #d9d9d9; display: flex; flex-direction: column; padding-top: 1px; padding-bottom: 1px; }
.sb-btn { height: 16px; background: #fff; display: flex; align-items: center; justify-content: center; }
.dark.caret { border-top: 4px solid #555; border-left-width: 4px; border-right-width: 4px; }
.dark.tri-up { border-bottom-color: #555; }
.sb-thumb { height: 29px; background: #fff; border: 1px solid #c6c6c6; margin: 285px 0 179px; }

/* status */
.status { height: 22px; flex: none; background: #f1f1f1; border-top: 1px solid #c6c6c6; display: flex; align-items: center; font-size: 10.700px; color: #555; white-space: nowrap; }
.st-page { margin-left: 5px; width: 64px; }
.st-words { width: 64px; }
.st-proof { margin-right: 11px; }
.st-right { margin-left: auto; display: flex; align-items: center; height: 21px; }
.view { display: flex; align-items: center; justify-content: center; height: 21px; width: 29px; }
.view-on { background: #c6c6c6; width: 30px; margin: 0 3px 0 1px; }
.zoom-minus { width: 9px; height: 2px; background: #555; margin-left: 2px; }
.zoom-track { position: relative; width: 100px; height: 1px; background: #a8a8a8; margin: 0 4px 0 2px; }
.zoom-thumb { position: absolute; left: 49px; top: -5px; width: 4px; height: 11px; background: #555; }
.zoom-plus { width: 9px; height: 9px; background: linear-gradient(#555,#555) center/9px 2px no-repeat, linear-gradient(#555,#555) center/2px 9px no-repeat; }
.zoom-pct { width: 43px; text-align: right; padding-right: 5px; font-size: 11px; }

/* taskbar */
.taskbar { height: 26px; flex: none; background: #0b0d12; display: flex; align-items: stretch; color: #fff; padding-left: .5px; }
.tb { width: 32.600px; flex: none; display: flex; align-items: center; justify-content: center; position: relative; }
.tb-open::after { content: ""; position: absolute; left: 3px; right: 3px; bottom: 0; height: 2px; background: #76b9ed; }
.tb-active { background: #3a3d44; }
.tb-active::after { left: 0; right: 0; }
.t-app { font-family: "Liberation Sans", sans-serif; font-size: 10px; font-weight: 700; fill: #fff; }
.clock { margin-left: auto; width: 42px; display: flex; flex-direction: column; align-items: center; justify-content: center; font-family: "Liberation Sans", sans-serif; font-size: 9.500px; line-height: 12px; color: #e8e8e8; white-space: nowrap; }
```
